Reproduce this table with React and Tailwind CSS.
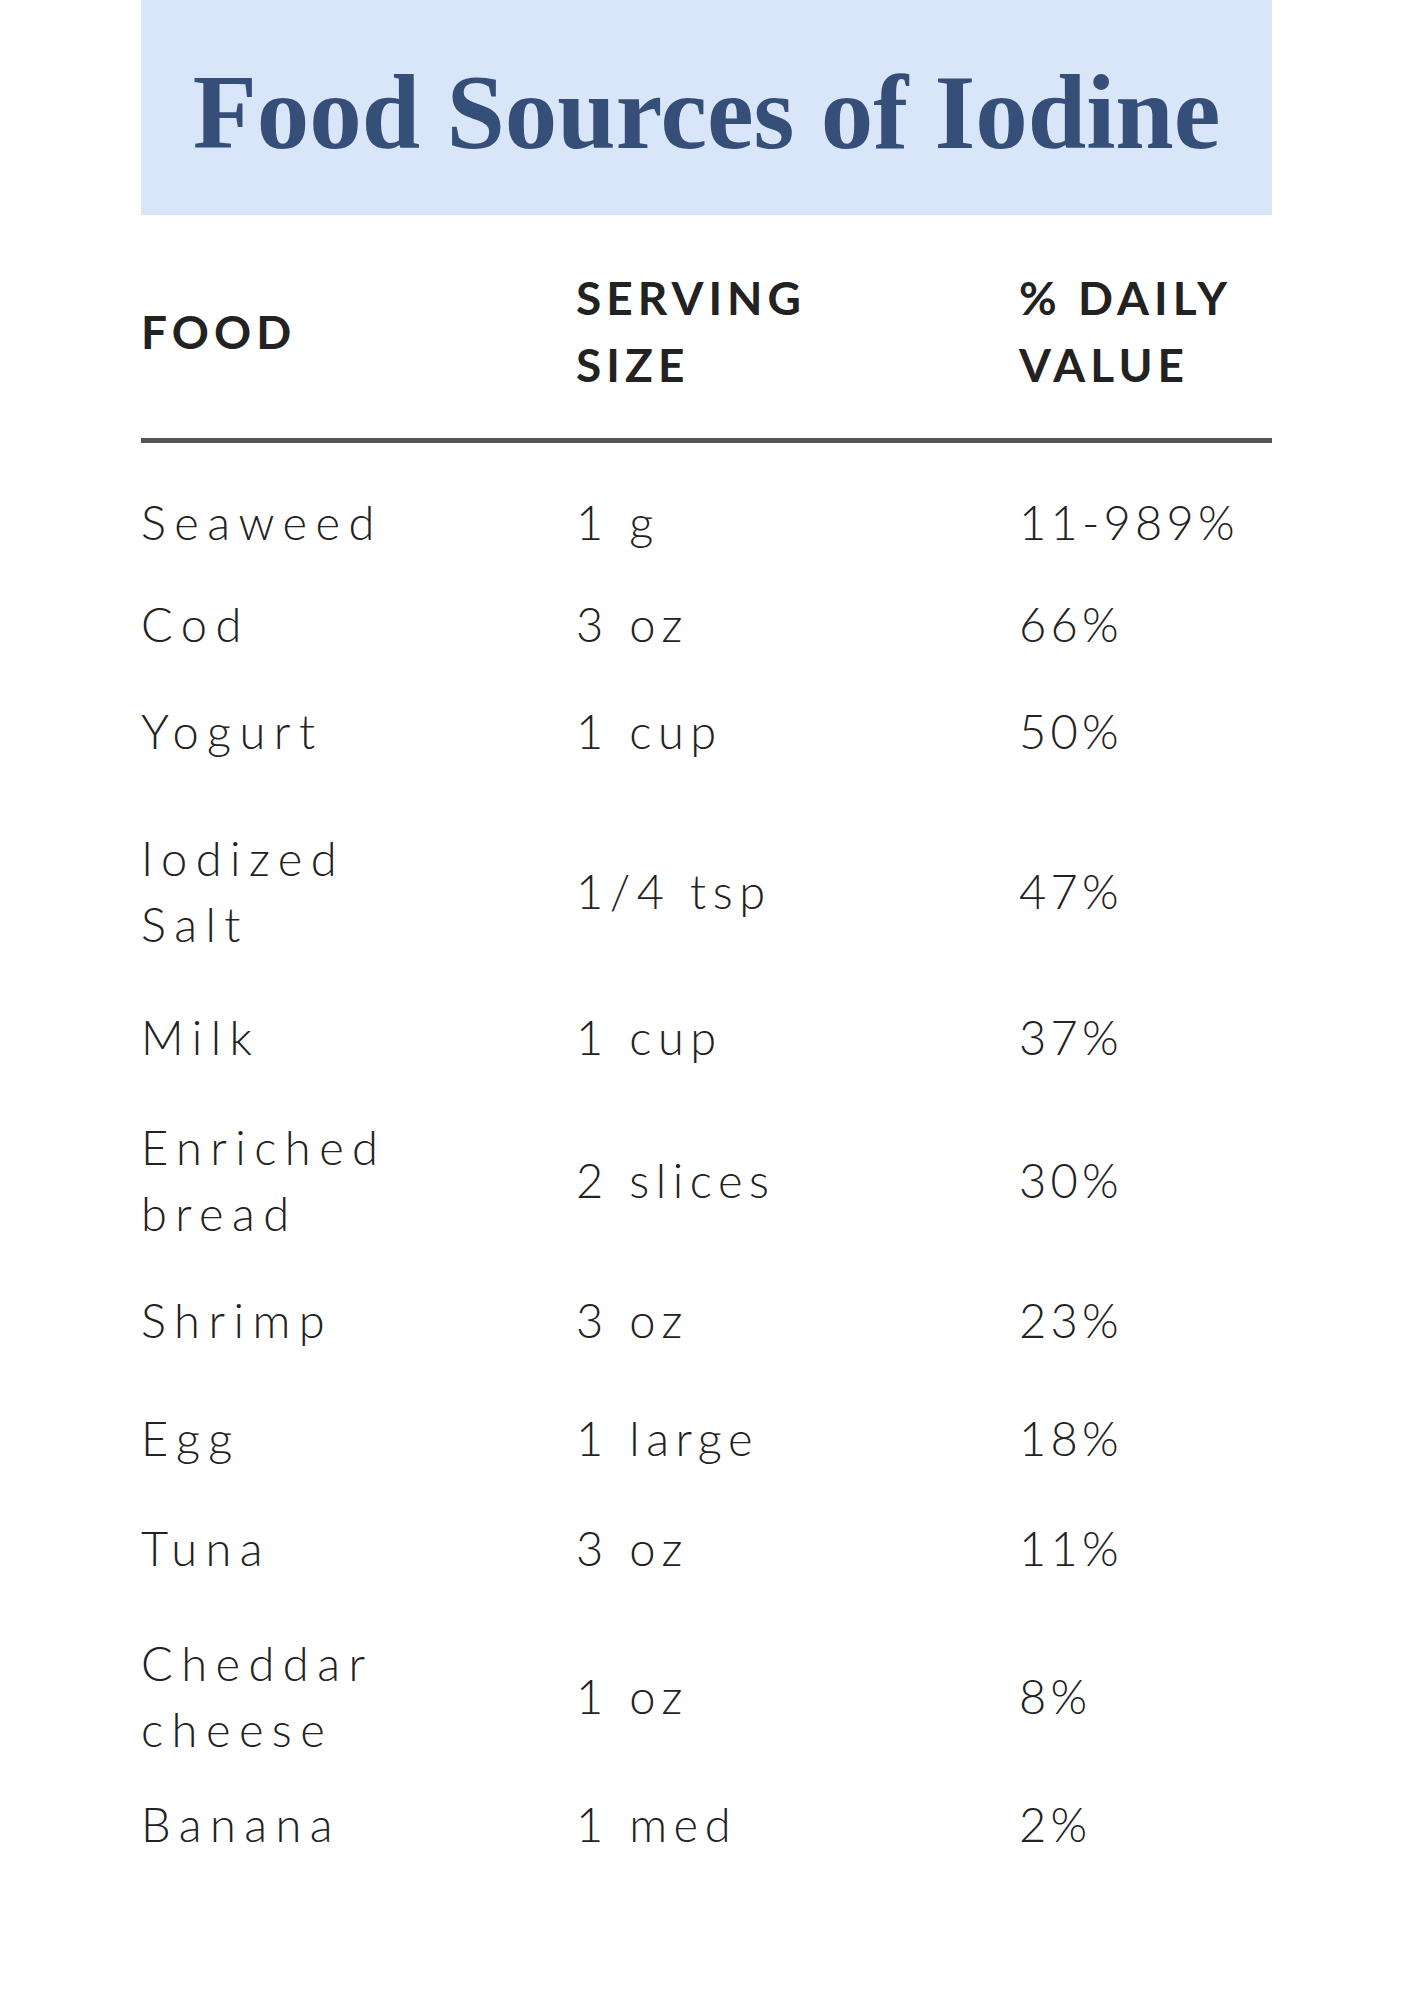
import React from "react";

const rows = [
  { food: ["Seaweed"], size: "1 g", dv: "11-989%", gap: "mt-[46px]" },
  { food: ["Cod"], size: "3 oz", dv: "66%", gap: "mt-[36px]" },
  { food: ["Yogurt"], size: "1 cup", dv: "50%", gap: "mt-[41px]" },
  { food: ["Iodized", "Salt"], size: "1/4 tsp", dv: "47%", gap: "mt-[61px]" },
  { food: ["Milk"], size: "1 cup", dv: "37%", gap: "mt-[47px]" },
  { food: ["Enriched", "bread"], size: "2 slices", dv: "30%", gap: "mt-[44px]" },
  { food: ["Shrimp"], size: "3 oz", dv: "23%", gap: "mt-[41px]" },
  { food: ["Egg"], size: "1 large", dv: "18%", gap: "mt-[52px]" },
  { food: ["Tuna"], size: "3 oz", dv: "11%", gap: "mt-[44px]" },
  { food: ["Cheddar", "cheese"], size: "1 oz", dv: "8%", gap: "mt-[49px]" },
  { food: ["Banana"], size: "1 med", dv: "2%", gap: "mt-[29px]" },
];

const App = () => {
  return (
    <div className="w-[1414px] min-h-[2000px] bg-white">
      <div className="w-[1131px] ml-[141px]">
        <div className="h-[215px] bg-[#d9e6f9] flex items-center justify-center">
          <h1 className="text-[105px] leading-none font-bold text-[#364f79] font-['Liberation_Serif',serif] pt-[10px]">
            Food Sources of Iodine
          </h1>
        </div>

        <div className="grid grid-cols-[435px_443px_1fr] items-center pt-[49px] pb-[40px] border-b-[5px] border-[#555555] font-['Lato',sans-serif] font-bold text-[46px] leading-[67px] tracking-[0.11em] text-[#222222]">
          <div>FOOD</div>
          <div>
            SERVING
            <br />
            SIZE
          </div>
          <div>
            % DAILY
            <br />
            VALUE
          </div>
        </div>

        <div className="font-['Lato',sans-serif] font-light text-[47px] leading-[66px] text-[#222222]">
          {rows.map((r) => (
            <div
              key={r.food.join(" ")}
              className={`grid grid-cols-[435px_443px_1fr] items-center ${r.gap}`}
            >
              <div className="tracking-[0.18em]">
                {r.food.map((line) => (
                  <div key={line}>{line}</div>
                ))}
              </div>
              <div className="tracking-[0.14em]">{r.size}</div>
              <div className="tracking-[0.09em]">{r.dv}</div>
            </div>
          ))}
        </div>
      </div>
    </div>
  );
};

export default App;
